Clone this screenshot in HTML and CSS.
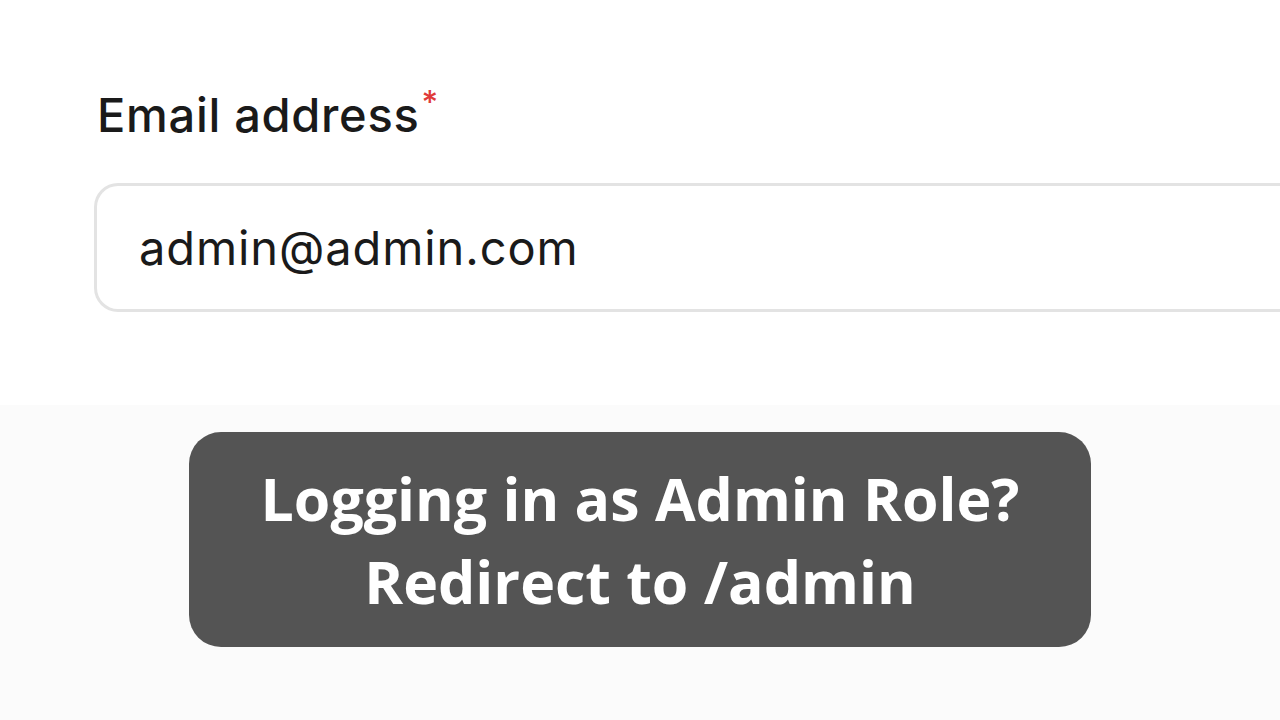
FILE: index.html
```html
<!DOCTYPE html>
<html>
<head>
<meta charset="utf-8">
<link rel="stylesheet" href="styles.css">
</head>
<body>
<div class="page">
  <section class="form-area">
    <label class="label">Email address<span class="req">*</span></label>
    <div class="input">admin@admin.com</div>
  </section>
  <section class="banner-area">
    <div class="banner">Logging in as Admin Role?<br>Redirect to /admin</div>
  </section>
</div>
</body>
</html>
```
FILE: styles.css
```css
html, body { margin: 0; padding: 0; }
body { width: 1280px; height: 720px; overflow: hidden; background: #fbfbfb; }
.page { display: flex; flex-direction: column; height: 720px; }
.form-area {
  background: #ffffff;
  height: 405px;
  box-sizing: border-box;
  padding: 88px 0 0 94px;
  display: flex;
  flex-direction: column;
  font-family: Inter, "Liberation Sans", sans-serif;
}
.label {
  font-size: 47px;
  font-weight: 500;
  color: #1a1a1a;
  padding-left: 3px;
  line-height: 54px;
  letter-spacing: 0.7px;
}
.req { color: #e03a3a; font-size: 32px; vertical-align: top; position: relative; top: -12px; margin-left: 2px; }
.input {
  margin-top: 41px;
  height: 129px;
  box-sizing: border-box;
  border: 3px solid #e3e3e3;
  border-right: none;
  border-radius: 24px 0 0 24px;
  padding-left: 42px;
  display: flex;
  align-items: center;
  font-size: 47px;
  letter-spacing: 0.9px;
  color: #1a1a1a;
}
.banner-area {
  flex: 1;
  display: flex;
  justify-content: flex-start;
  padding: 27px 0 0 189px;
}
.banner {
  width: 902px;
  height: 215px;
  box-sizing: border-box;
  background: #545454;
  border-radius: 32px;
  color: #ffffff;
  font-family: "Open Sans", sans-serif;
  font-weight: 700;
  font-size: 59px;
  line-height: 83px;
  text-align: center;
  padding-top: 25px;
}
```
